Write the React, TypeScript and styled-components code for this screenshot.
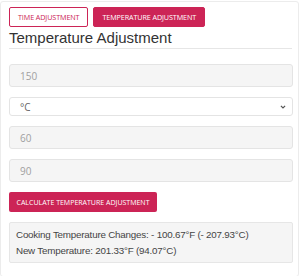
import styled, { createGlobalStyle } from 'styled-components';

const GlobalStyle = createGlobalStyle`
  html, body {
    margin: 0;
    padding: 0;
    background: #ffffff;
  }
`;

const accent = '#cc2456';

const Card = styled.div`
  box-sizing: border-box;
  width: 299px;
  height: 276px;
  margin-top: 1px;
  border: 1px solid #ececec;
  border-radius: 3px;
  padding: 5px 6px 0 7px;
  font-family: 'Liberation Sans', Arial, sans-serif;
`;

const Tabs = styled.div`
  display: flex;
  gap: 5px;
  margin-left: 1px;
`;

const TabButton = styled.button<{ active?: boolean }>`
  box-sizing: border-box;
  height: 20px;
  padding: 0 8px;
  border-radius: 2px;
  border: 1px solid ${accent};
  background: ${p => (p.active ? accent : '#ffffff')};
  color: ${p => (p.active ? '#ffffff' : accent)};
  font-family: 'Open Sans', sans-serif;
  font-size: 7.2px;
  text-transform: uppercase;
  letter-spacing: -0.1px;
`;

const Title = styled.h2`
  margin: 2px 0 0 1px;
  font-size: 15px;
  font-weight: 400;
  color: #333333;
  line-height: 17px;
  padding-bottom: 2px;
  border-bottom: 1px solid #e6e6e6;
  width: 283px;
`;

const Form = styled.div`
  display: flex;
  flex-direction: column;
  gap: 10px;
  margin-top: 15px;
  margin-left: 1px;
  width: 284px;
`;

const Field = styled.div<{ plain?: boolean }>`
  box-sizing: border-box;
  display: flex;
  align-items: center;
  justify-content: space-between;
  height: ${p => (p.plain ? '19px' : '23px')};
  padding: 0 6px 0 10px;
  border: 1px solid #e4e4e4;
  border-radius: 3px;
  background: ${p => (p.plain ? '#ffffff' : '#f5f5f5')};
  color: ${p => (p.plain ? '#666666' : '#a0a0a0')};
  font-family: 'Open Sans', sans-serif;
  font-size: 10px;
`;

const Chevron = styled.svg`
  width: 6px;
  height: 6px;
`;

const CalcButton = styled.button`
  box-sizing: border-box;
  align-self: flex-start;
  height: 20px;
  width: 148px;
  border: none;
  border-radius: 2px;
  background: ${accent};
  color: #ffffff;
  font-family: 'Open Sans', sans-serif;
  font-size: 7px;
  text-transform: uppercase;
  padding: 0;
`;

const Result = styled.div`
  box-sizing: border-box;
  height: 41px;
  padding: 4px 0 0 6px;
  border: 1px solid #e6e6e6;
  border-radius: 2px;
  background: #f5f5f5;
  color: #444444;
  font-size: 9.8px;
  letter-spacing: -0.2px;
  line-height: 16px;
`;

export default function App() {
  return (
    <>
      <GlobalStyle />
      <Card>
        <Tabs>
          <TabButton>Time Adjustment</TabButton>
          <TabButton active>Temperature Adjustment</TabButton>
        </Tabs>
        <Title>Temperature Adjustment</Title>
        <Form>
          <Field>150</Field>
          <Field plain>
            <span>°C</span>
            <Chevron viewBox="0 0 10 10">
              <path d="M1.5 3 L5 6.5 L8.5 3" fill="none" stroke="#555" strokeWidth="2" />
            </Chevron>
          </Field>
          <Field>60</Field>
          <Field>90</Field>
          <CalcButton>Calculate Temperature Adjustment</CalcButton>
          <Result>
            <div>Cooking Temperature Changes: - 100.67°F (- 207.93°C)</div>
            <div>New Temperature: 201.33°F (94.07°C)</div>
          </Result>
        </Form>
      </Card>
    </>
  );
}
